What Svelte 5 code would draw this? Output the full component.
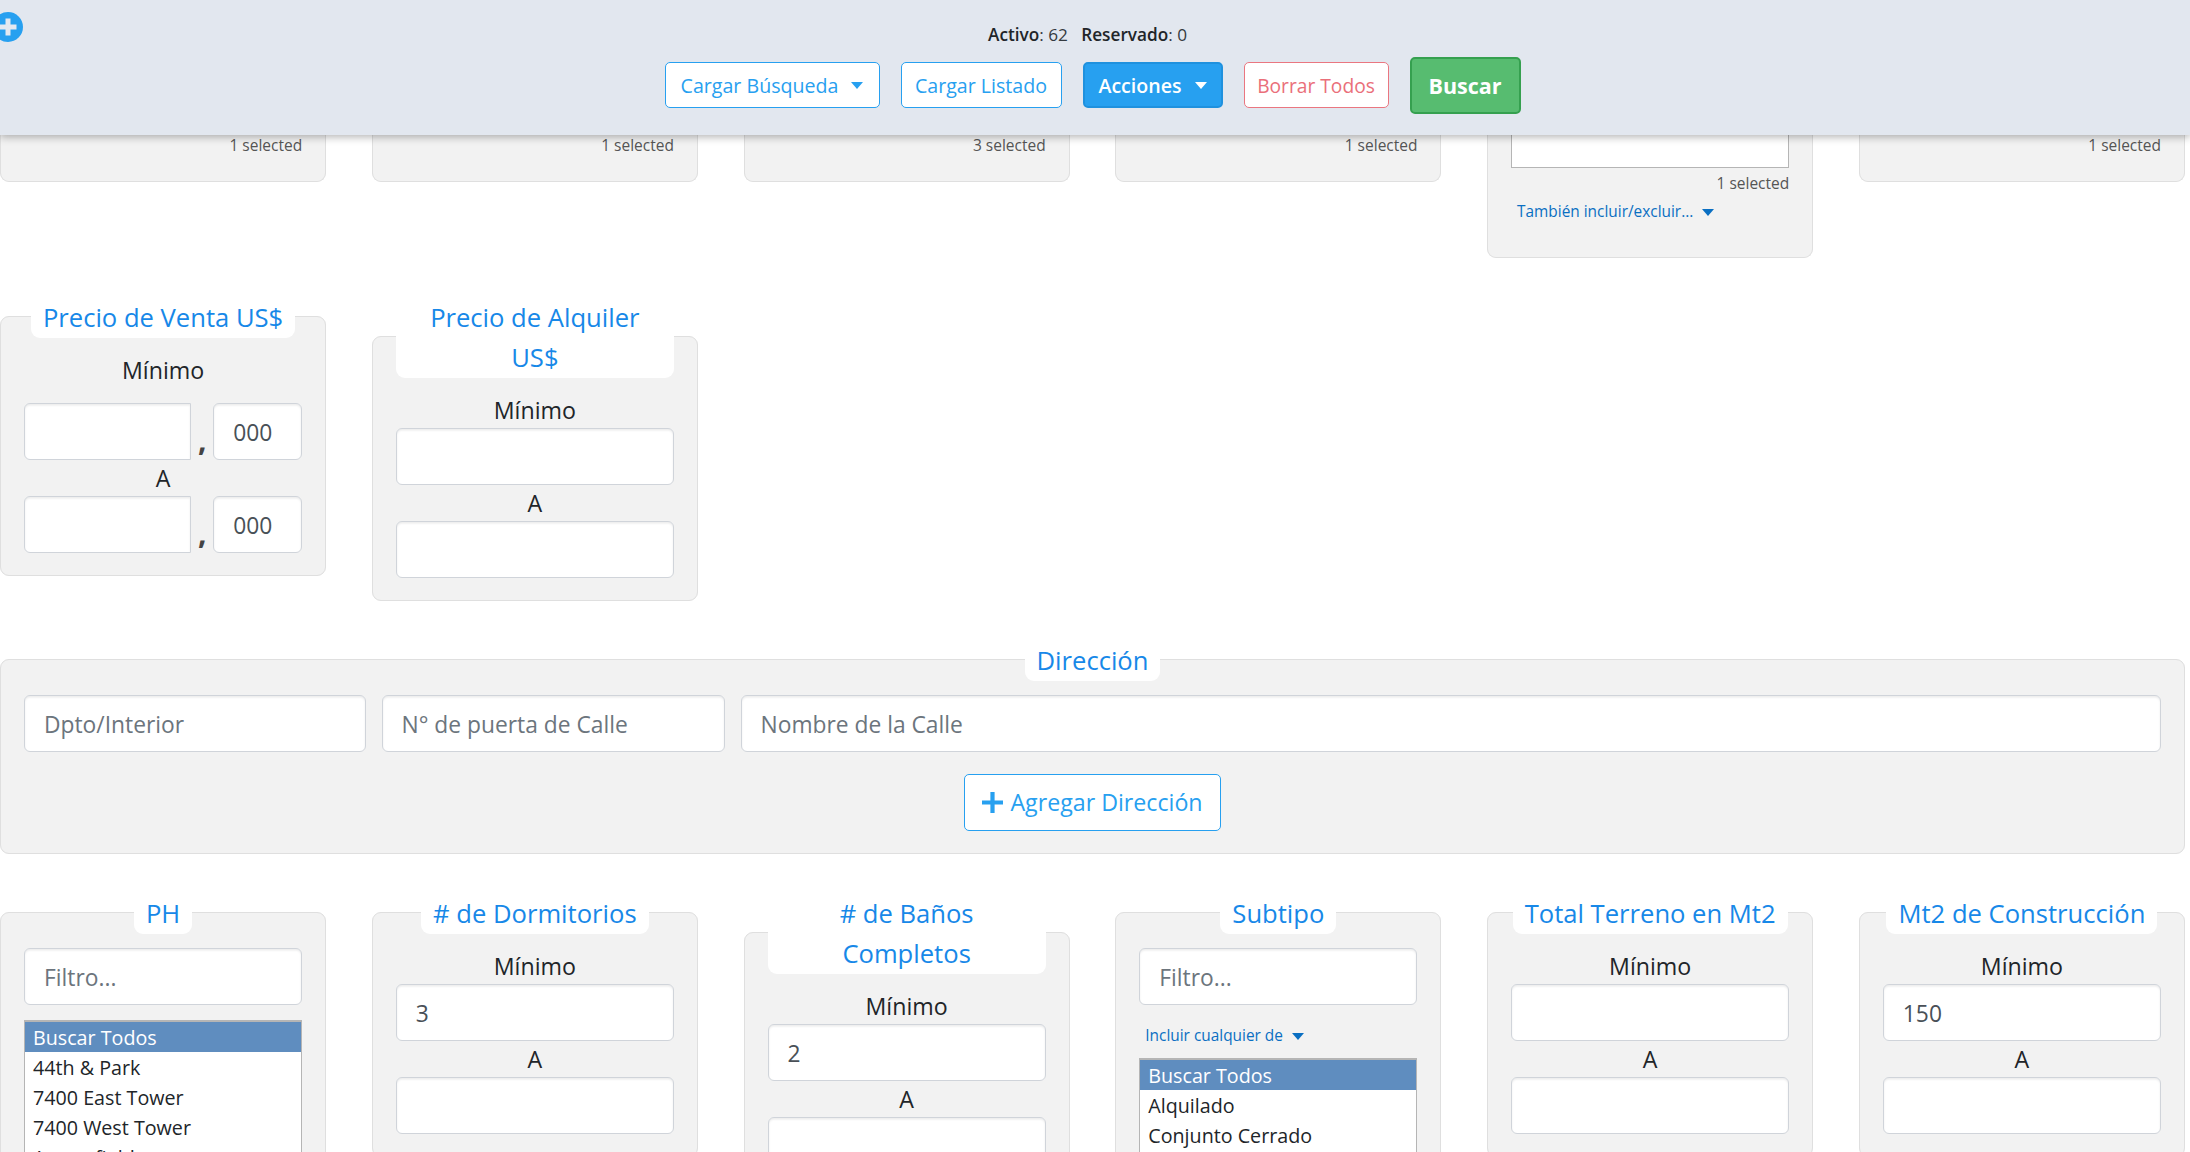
<script>
	// search form, scrolled a little under the fixed action bar
	const topCards = [
		{ count: 1 },
		{ count: 1 },
		{ count: 3 },
		{ count: 1 },
		{ count: 1, tall: true },
		{ count: 1 }
	];

	const rangeCards = [
		{ title: '# de Dormitorios', min: '3' },
		{ title: '# de Baños Completos', min: '2' }
	];

	const phOptions = ['Buscar Todos', '44th & Park', '7400 East Tower', '7400 West Tower', 'Acqua fields'];
	const subtipoOptions = ['Buscar Todos', 'Alquilado', 'Conjunto Cerrado'];
</script>

<div class="page">
	<header class="action-bar">
		<svg class="add-icon" viewBox="0 0 30 30" width="30" height="30" aria-hidden="true">
			<circle cx="15" cy="15" r="15" fill="#27a0f0" />
			<path d="M12.5 6.5h5v6h6v5h-6v6h-5v-6h-6v-5h6z" fill="#e3e8f0" />
		</svg>
		<p class="status"><b>Activo</b>: 62 &nbsp; <b>Reservado</b>: 0</p>
		<div class="actions">
			<button class="btn btn-outline btn-load">Cargar Búsqueda <span class="caret"></span></button>
			<button class="btn btn-outline btn-list">Cargar Listado</button>
			<button class="btn btn-primary">Acciones <span class="caret"></span></button>
			<button class="btn btn-danger">Borrar Todos</button>
			<button class="btn btn-search">Buscar</button>
		</div>
	</header>

	<div class="row row-top">
		{#each topCards as card}
			<fieldset class="card">
				<div class="list-stub" class:list-tall={card.tall}></div>
				<p class="selected">{card.count} selected</p>
				{#if card.tall}
					<a class="link link-extra" href="#top">También incluir/excluir... <span class="caret caret-link"></span></a>
				{/if}
			</fieldset>
		{/each}
	</div>

	<div class="row">
		<fieldset class="card">
			<legend>Precio de Venta US$</legend>
			<div class="label label-spaced">Mínimo</div>
			<div class="price">
				<input class="field" />
				<span class="comma">,</span>
				<input class="field field-thousands" value="000" />
			</div>
			<div class="label">A</div>
			<div class="price">
				<input class="field" />
				<span class="comma">,</span>
				<input class="field field-thousands" value="000" />
			</div>
		</fieldset>
		<fieldset class="card">
			<legend>Precio de Alquiler US$</legend>
			<div class="label">Mínimo</div>
			<input class="field" />
			<div class="label">A</div>
			<input class="field" />
		</fieldset>
	</div>

	<div class="row">
		<fieldset class="card card-wide">
			<legend>Dirección</legend>
			<div class="address">
				<input class="field" placeholder="Dpto/Interior" />
				<input class="field" placeholder="N° de puerta de Calle" />
				<input class="field" placeholder="Nombre de la Calle" />
			</div>
			<button class="btn btn-outline btn-add">
				<svg viewBox="0 0 20 20" width="21" height="21" aria-hidden="true">
					<path d="M8 0h4v8h8v4h-8v8H8v-8H0V8h8z" fill="currentColor" />
				</svg>
				Agregar Dirección
			</button>
		</fieldset>
	</div>

	<div class="row">
		<fieldset class="card">
			<legend>PH</legend>
			<input class="field field-filter" placeholder="Filtro..." />
			<div class="listbox">
				{#each phOptions as opt, i}
					<div class="option" class:option-selected={i === 0}>{opt}</div>
				{/each}
			</div>
		</fieldset>

		{#each rangeCards as card}
			<fieldset class="card">
				<legend>{card.title}</legend>
				<div class="label">Mínimo</div>
				<input class="field" value={card.min} />
				<div class="label">A</div>
				<input class="field" />
			</fieldset>
		{/each}

		<fieldset class="card">
			<legend>Subtipo</legend>
			<input class="field field-filter" placeholder="Filtro..." />
			<a class="link link-any" href="#top">Incluir cualquier de <span class="caret caret-link"></span></a>
			<div class="listbox listbox-sub">
				{#each subtipoOptions as opt, i}
					<div class="option" class:option-selected={i === 0}>{opt}</div>
				{/each}
			</div>
		</fieldset>

		<fieldset class="card">
			<legend>Total Terreno en Mt2</legend>
			<div class="label">Mínimo</div>
			<input class="field" />
			<div class="label">A</div>
			<input class="field" />
		</fieldset>

		<fieldset class="card">
			<legend>Mt2 de Construcción</legend>
			<div class="label">Mínimo</div>
			<input class="field" value="150" />
			<div class="label">A</div>
			<input class="field" />
		</fieldset>
	</div>
</div>

<style>
	:global(body) {
		margin: 0;
		background: #fff;
		overflow: hidden;
	}
	.page {
		position: relative;
		box-sizing: border-box;
		width: 2190px;
		height: 1152px;
		padding-right: 5px;
		overflow: hidden;
		font-family: "Open Sans", "Liberation Sans", sans-serif;
		font-size: 23px;
		color: #212529;
	}
	.action-bar {
		position: absolute;
		top: 0;
		left: 0;
		z-index: 10;
		box-sizing: border-box;
		width: 2190px;
		height: 135px;
		padding: 22px 5px 0 0;
		background: #e2e7ef;
		box-shadow: 0 2px 8px rgba(0, 0, 0, 0.3);
		display: flex;
		flex-direction: column;
		align-items: center;
	}
	.add-icon {
		position: absolute;
		left: -7px;
		top: 12px;
	}
	.status {
		margin: 0 10px 0 0;
		height: 35px;
		line-height: 26px;
		font-size: 17.2px;
		color: #343a40;
		white-space: pre;
	}
	.status b {
		font-weight: 600;
		color: #212529;
	}
	.actions {
		display: flex;
		align-items: center;
		gap: 21px;
	}
	.btn {
		box-sizing: border-box;
		height: 46px;
		margin-bottom: 1px;
		padding: 0 14px;
		border: 2px solid;
		border-radius: 5px;
		background: #fff;
		font-family: inherit;
		font-size: 19.6px;
		white-space: nowrap;
		display: inline-flex;
		align-items: center;
		justify-content: center;
	}
	.btn-outline {
		border-color: #27a0f0;
		color: #27a0f0;
		border-width: 1.5px;
	}
	.btn-load {
		width: 215px;
	}
	.btn-list {
		width: 161px;
	}
	.btn-primary {
		width: 140px;
		background: #27a0f0;
		border-color: #1f91de;
		color: #fff;
		font-weight: 600;
	}
	.btn-danger {
		width: 145px;
		border: 1.5px solid #ea7680;
		color: #ea6f7a;
		font-size: 19.2px;
	}
	.btn-search {
		width: 111px;
		height: 57px;
		margin-bottom: 0;
		background: #57bc70;
		border-color: #35a04f;
		color: #fff;
		font-weight: 700;
		font-size: 21.5px;
	}
	.caret {
		display: inline-block;
		margin-left: 13px;
		border-left: 6.5px solid transparent;
		border-right: 6.5px solid transparent;
		border-top: 7px solid currentColor;
	}
	.caret-link {
		margin-left: 5px;
		vertical-align: middle;
	}
	.row {
		display: grid;
		grid-template-columns: repeat(6, 1fr);
		column-gap: 45.6px;
		align-items: start;
		margin-bottom: 38px;
	}
	.card {
		box-sizing: border-box;
		min-width: 0;
		margin: 0;
		padding: 0 23px 22.5px;
		background: #f2f2f2;
		border: 1.5px solid #dfdfdf;
		border-radius: 9px;
	}
	.card-wide {
		grid-column: 1 / -1;
	}
	.row-top {
		margin-bottom: 38.5px;
	}
	.row-top .card {
		padding-bottom: 21.5px;
		border-top: 0;
	}
	legend {
		box-sizing: border-box;
		position: relative;
		top: 1.5px;
		margin: 0 auto -3px;
		padding: 0 12px;
		background: #fff;
		border-radius: 0 0 9px 9px;
		color: #1788e8;
		font-size: 25.6px;
		line-height: 40px;
		text-align: center;
	}
	.list-stub {
		height: 130px;
	}
	.list-tall {
		height: 168px;
		box-sizing: border-box;
		background: #fff;
		border: 1.5px solid #b5b5b5;
	}
	.selected {
		margin: 2px 0 0;
		font-size: 15.5px;
		line-height: 27px;
		text-align: right;
		color: #555;
	}
	.link {
		display: block;
		color: #0a6fc2;
		text-decoration: none;
		font-size: 15.4px;
	}
	.link-extra {
		margin: 1px 0 9px 6px;
		line-height: 28px;
	}
	.link-any {
		margin: 19px 0 0 6px;
		line-height: 24px;
	}
	.label {
		text-align: center;
		font-size: 23.2px;
		line-height: 36px;
	}
	.card > .label:first-of-type {
		margin-top: 18.5px;
	}
	.card > .label-spaced:first-of-type {
		margin: 18.5px 0 15px;
	}
	.field {
		box-sizing: border-box;
		display: block;
		width: 100%;
		height: 57px;
		padding: 2px 19px 0;
		border: 1.5px solid #d0d4da;
		border-radius: 6px;
		background: #fff;
		box-shadow: inset 0 1.5px 2px rgba(0, 0, 0, 0.08);
		font-family: inherit;
		font-size: 22.8px;
		color: #495057;
	}
	.field::placeholder {
		color: #6c757d;
		opacity: 1;
	}
	.price {
		display: flex;
		align-items: stretch;
	}
	.price .field:first-child {
		flex: 1;
		min-width: 0;
		border-radius: 6px 0 0 6px;
	}
	.field-thousands {
		width: 89px;
		flex: none;
	}
	.comma {
		width: 22px;
		flex: none;
		align-self: flex-end;
		text-align: center;
		font-size: 30px;
		font-weight: 700;
		line-height: 40px;
		color: #444;
	}
	.address {
		display: grid;
		grid-template-columns: 342px 343.5px 1fr;
		column-gap: 15.5px;
		margin-top: 18.5px;
	}
	.btn-add {
		display: flex;
		width: 257px;
		height: 57px;
		margin: 22px auto 0;
		gap: 7px;
		font-size: 23.2px;
	}
	.field-filter {
		margin-top: 18.5px;
	}
	.listbox {
		box-sizing: border-box;
		margin-top: 15px;
		height: 200px;
		overflow: hidden;
		background: #fff;
		border: 1.5px solid #b5b5b5;
		border-top-width: 2px;
	}
	.listbox-sub {
		margin-top: 10px;
	}
	.option {
		padding: 1px 0 0 8px;
		font-size: 19.7px;
		line-height: 29.2px;
		color: #212529;
		white-space: nowrap;
	}
	.option-selected {
		background: #5f8dbf;
		color: #fff;
	}
</style>
